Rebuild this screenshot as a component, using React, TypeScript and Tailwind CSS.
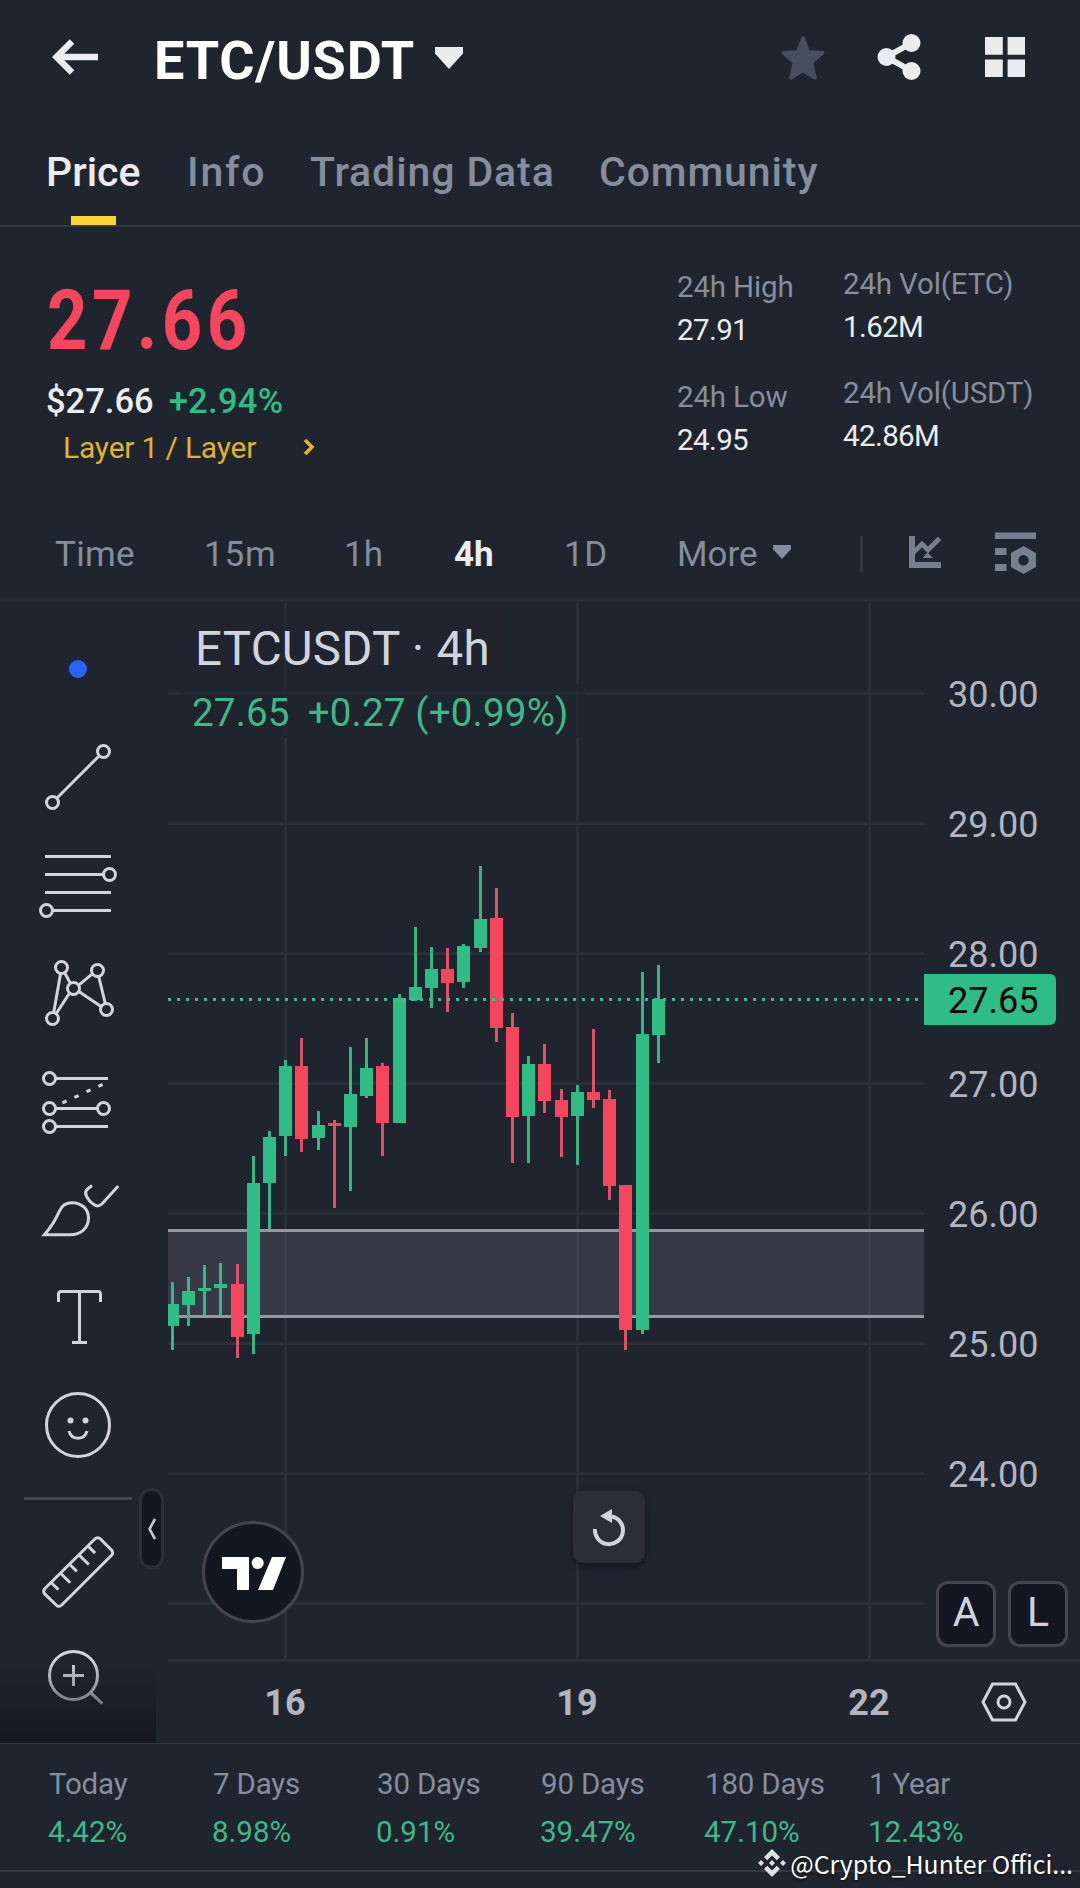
import type { ReactNode } from "react";
import { clsx } from "clsx";

const UP = "#2ebd85";
const DOWN = "#f6465d";

const TABS = [
  { label: "Price", className: "w-[141px] text-[#eaecef]", active: true },
  { label: "Info", className: "w-[123px] tracking-[1.8px]" },
  { label: "Trading Data", className: "w-[289px] tracking-[0.9px]" },
  { label: "Community", className: "tracking-[0.9px]" },
];

const STATS = [
  [
    { label: "24h High", value: "27.91" },
    { label: "24h Low", value: "24.95" },
  ],
  [
    { label: "24h Vol(ETC)", value: "1.62M" },
    { label: "24h Vol(USDT)", value: "42.86M" },
  ],
];

const INTERVALS = [
  { label: "Time", className: "w-[149px] tracking-[0.3px]" },
  { label: "15m", className: "w-[140px] tracking-[0.8px]" },
  { label: "1h", className: "w-[110px]" },
  { label: "4h", className: "w-[110px] font-bold text-[#eaecef]" },
  { label: "1D", className: "w-[112px] tracking-[0.5px]" },
];

const PRICES = ["30.00", "29.00", "28.00", "27.00", "26.00", "25.00", "24.00"];

const PERIODS = [
  { label: "Today", value: "4.42%" },
  { label: "7 Days", value: "8.98%" },
  { label: "30 Days", value: "0.91%" },
  { label: "90 Days", value: "39.47%" },
  { label: "180 Days", value: "47.10%" },
  { label: "1 Year", value: "12.43%" },
];

// [up, high, body top, body bottom, low] in chart pixels
const CANDLES: [number, number, number, number, number][] = [
  [1, 1282, 1304, 1326, 1350],
  [1, 1277, 1291, 1305, 1326],
  [1, 1265, 1288, 1291, 1315],
  [1, 1263, 1284, 1288, 1315],
  [0, 1264, 1284, 1337, 1358],
  [1, 1156, 1183, 1334, 1354],
  [1, 1131, 1137, 1183, 1229],
  [1, 1060, 1066, 1136, 1156],
  [0, 1038, 1066, 1139, 1152],
  [1, 1111, 1125, 1138, 1150],
  [0, 1120, 1123, 1126, 1208],
  [1, 1047, 1094, 1127, 1191],
  [1, 1038, 1068, 1096, 1098],
  [0, 1063, 1066, 1123, 1156],
  [1, 994, 998, 1123, 1123],
  [1, 927, 987, 1000, 1001],
  [1, 947, 969, 988, 1008],
  [0, 948, 969, 983, 1012],
  [1, 944, 946, 982, 988],
  [1, 866, 919, 948, 952],
  [0, 888, 918, 1028, 1042],
  [0, 1013, 1027, 1117, 1163],
  [1, 1056, 1064, 1116, 1163],
  [0, 1044, 1064, 1101, 1113],
  [0, 1089, 1100, 1117, 1157],
  [1, 1085, 1092, 1116, 1165],
  [0, 1029, 1092, 1100, 1108],
  [0, 1090, 1099, 1186, 1200],
  [0, 1185, 1185, 1330, 1350],
  [1, 972, 1034, 1330, 1334],
  [1, 965, 999, 1035, 1063],
];

function Caret({ className }: { className?: string }) {
  return (
    <svg viewBox="0 0 28 22" className={className} fill="currentColor">
      <path d="M0 0h28v6.5L14 22 0 6.5z" />
    </svg>
  );
}

function Header() {
  return (
    <header className="flex h-[116px] shrink-0 items-center pl-[52px] pr-[55px] text-[#eaecef]">
      <svg viewBox="0 0 46 36" className="-mt-0.5 h-[36px] w-[46px]" fill="none" stroke="currentColor" strokeWidth="6.4">
        <path d="M4 18h42M20 2.5 4.5 18 20 33.5" />
      </svg>
      <h1 className="ml-[56px] w-[281px] pt-[5px] text-[54px] leading-none font-bold tracking-[0.8px] whitespace-nowrap text-white">
        ETC/USDT
      </h1>
      <Caret className="h-[22px] w-[28px]" />
      <svg viewBox="0 0 24 24" className="ml-auto h-[54px] w-[54px] text-[#474f5e]" fill="currentColor" stroke="currentColor" strokeWidth="1.6" strokeLinejoin="round">
        <path d="M12 3.2l2.3 6 6.4.5-4.9 4.2 1.5 6.9L12 17.5l-5.3 3.3 1.5-6.9-4.9-4.2 6.4-.5z" />
      </svg>
      <svg viewBox="0 0 44 48" className="-mt-0.5 ml-[47px] h-[48px] w-[44px]" fill="currentColor">
        <path d="M34.5 10 9.5 24l25 14" fill="none" stroke="currentColor" strokeWidth="6" />
        <circle cx="9.5" cy="24" r="9" />
        <circle cx="34.5" cy="10" r="9" />
        <circle cx="34.5" cy="38" r="9" />
      </svg>
      <svg viewBox="0 0 40 40" className="-mt-0.5 ml-[64px] h-[40px] w-[40px]" fill="currentColor">
        <path d="M0 0h17.8v17.8H0zM22.6 0H40v17.8H22.6zM0 22.4h17.8V40H0zM22.6 22.4H40V40H22.6z" />
      </svg>
    </header>
  );
}

function Tabs() {
  return (
    <nav className="flex h-[111px] shrink-0 border-b-2 border-[#323844] pl-[46px] text-[41px] font-medium text-[#848e9c]">
      {TABS.map((tab) => (
        <div key={tab.label} className={clsx("flex flex-col justify-between whitespace-nowrap", tab.className)}>
          <span className="mt-[32px] leading-[48px]">{tab.label}</span>
          {tab.active && <span className="ml-[25px] h-[9px] w-[45px] bg-[#fcd535]" />}
        </div>
      ))}
    </nav>
  );
}

function Summary() {
  return (
    <section className="flex h-[283px] shrink-0">
      <div className="w-[677px] pl-[46px]">
        <div className="mt-[52px] ml-[1px] w-[240px] origin-left scale-x-[0.84] text-[84px] leading-[84px] font-bold tracking-[5.3px] text-[#f6465d]">
          27.66
        </div>
        <div className="mt-[16px] flex gap-[15px] text-[34.5px] leading-[44px] font-medium">
          <span className="text-[#eaecef]">$27.66</span>
          <span className="tracking-[0.3px] text-[#2ebd85]">+2.94%</span>
        </div>
        <div className="mt-[4px] flex h-[40px] items-center pl-[17px] text-[30px] text-[#e0b22d]">
          <span className="w-[240px] tracking-[-0.2px]">Layer 1 / Layer</span>
          <svg viewBox="0 0 12 18" className="h-[18px] w-[12px]" fill="none" stroke="currentColor" strokeWidth="3.6">
            <path d="M2 2l7 7-7 7" />
          </svg>
        </div>
      </div>
      {STATS.map((col, i) => (
        <div
          key={i}
          className={clsx(
            "flex flex-col text-[29.5px] leading-[43px] whitespace-nowrap",
            i === 0 ? "w-[166px] gap-6 pt-[39px]" : "gap-[23px] pt-[36px]"
          )}
        >
          {col.map((s) => (
            <div key={s.label}>
              <div className="tracking-[-0.15px] text-[#848e9c]">{s.label}</div>
              <div className="tracking-[-0.6px] text-[#eaecef]">{s.value}</div>
            </div>
          ))}
        </div>
      ))}
    </section>
  );
}

function IntervalBar() {
  return (
    <div className="flex h-[91px] shrink-0 items-center border-b-3 border-[#272d37] pl-[55px] text-[35px] text-[#848e9c]">
      {INTERVALS.map((it) => (
        <span key={it.label} className={clsx("pt-[3px]", it.className)}>
          {it.label}
        </span>
      ))}
      <span className="w-[97px] pt-[3px] pl-[1px]">More</span>
      <Caret className="-mt-[4px] h-[14px] w-[18px]" />
      <span className="ml-[69px] h-[36px] w-[3px] bg-[#323844]" />
      <svg viewBox="0 0 32 32" className="-mt-1 ml-[46px] h-[32px] w-[32px]" fill="#76808f">
        <path d="M0 0h6v26h26v6H0z" />
        <path d="M4 17l9-9 6 6L30.5 2.5" fill="none" stroke="#76808f" strokeWidth="4.6" />
        <path d="M13.5 22l5-5.500 5.500 5.500z" />
      </svg>
      <svg viewBox="0 0 41 42" className="-mt-[2px] ml-[54px] h-[42px] w-[41px]" fill="#76808f">
        <path d="M0 0.5h41v6.5H0zM0 16h11.5v7H0zM0 32h11.5v7H0z" />
        <path fillRule="evenodd" d="M28.5 14 41 21v14L28.5 42 16 35V21zM28.5 23a5.200 5.200 0 100 10.400 5.200 5.200 0 000-10.400z" />
      </svg>
    </div>
  );
}

function Tool({ children }: { children: ReactNode }) {
  return (
    <div className="flex h-[108px] w-[156px] items-center justify-center">
      <svg viewBox="0 0 28 28" className="h-[84px] w-[84px] overflow-visible" fill="none" stroke="#d1d4dc" strokeWidth="1">
        {children}
      </svg>
    </div>
  );
}

function DrawingTools() {
  return (
    <aside className="relative w-[168px] shrink-0 pt-[14px]">
      <Tool>
        <circle cx="14" cy="14" r="3" fill="#2962ff" stroke="none" />
      </Tool>
      <Tool>
        <circle cx="22.5" cy="5.5" r="2" />
        <circle cx="5.5" cy="22.5" r="2" />
        <path d="M7 21 21 7" />
      </Tool>
      <Tool>
        <path d="M3 4.5h22M3 10.5h19.5M3 16.5h22M5.5 22.5H25" />
        <circle cx="24.5" cy="10.5" r="2" />
        <circle cx="3.5" cy="22.5" r="2" />
      </Tool>
      <Tool>
        <circle cx="8.5" cy="5.5" r="2" />
        <circle cx="20.5" cy="6.5" r="2" />
        <circle cx="12.5" cy="12.5" r="2" />
        <circle cx="5.5" cy="22.5" r="2" />
        <circle cx="23.5" cy="19.5" r="2" />
        <path d="M9.5 7.2l2 3.6M14.2 11.4l4.6-3.8M20.9 8.5l2.2 9M14.3 13.5l7.4 5M11.2 14l-4.5 6.9M8.2 7.5 5.9 20.5" />
      </Tool>
      <Tool>
        <circle cx="4.5" cy="6.5" r="2" />
        <circle cx="4.5" cy="16.5" r="2" />
        <circle cx="22.5" cy="16.5" r="2" />
        <circle cx="4.5" cy="22.5" r="2" />
        <path d="M6.5 6.5H24M6.5 16.5h14M6.5 22.5H24" />
        <path d="M8.8 14.6l1.4-.6M12.8 12.8l1.4-.6M16.8 10.9l1.4-.6M20.8 9.1l1.4-.6" />
      </Tool>
      <Tool>
        <path d="M2.8 22.6h8.500c3.700 0 6.200-2.300 6.200-5.600 0-3-2.300-5.100-5.500-5.100-2.200 0-3.400.9-4.200 2.800-1.300 3-3 5.600-5 7.900z" />
        <path d="M18.700 6.200c-1.700 1-2.800 2-1.800 3.700.5.900 1.200 1.700 2.100 2.400 1.200 1 1.900.9 2.900.1l5.500-6.100" />
      </Tool>
      <Tool>
        <path d="M7.5 9V6.4c0-.6.4-.9.9-.9h12.200c.5 0 .9.3.9.9V9M14.500 5.500v17M12 22.500h5" />
      </Tool>
      <Tool>
        <circle cx="14" cy="14" r="10.500" />
        <circle cx="11.500" cy="12.500" r="1" fill="#d1d4dc" stroke="none" />
        <circle cx="16.500" cy="12.500" r="1" fill="#d1d4dc" stroke="none" />
        <path d="M11 16c.4 1.600 1.500 2.400 3 2.400s2.600-.8 3-2.400" />
      </Tool>
      <div className="my-[18px] ml-[24px] h-[3px] w-[108px] bg-[#434651]" />
      <Tool>
        <path d="M19.700 2.900a1.200 1.200 0 011.700 0l3.800 3.800a1.200 1.200 0 010 1.700L8.500 25.100a1.200 1.200 0 01-1.700 0l-3.900-3.800a1.200 1.200 0 010-1.700z" />
        <path d="M5 17.500l2.500 2.400M8.200 14.400l3.200 3.200M11.200 11.400l2.400 2.400M14.300 8.300l3.300 3.200M17.300 5.300l2.400 2.400" />
      </Tool>
      <Tool>
        <circle cx="12.500" cy="12.500" r="8" />
        <path d="M9 12.500h7M12.500 9v7M18.200 18.200l3.900 3.700" />
      </Tool>
      <div className="absolute bottom-0 left-0 h-[84px] w-[156px] bg-linear-to-b from-[#141722]/0 to-[#141722]/90" />
      <button className="absolute top-[887px] left-[139px] flex h-[81px] w-[25px] items-center justify-center rounded-[12px] border-3 border-[#2a2e39] bg-[#131722]">
        <svg viewBox="0 0 8 22" className="h-[22px] w-[8px]" fill="none" stroke="#c3c6ce" strokeWidth="2.6">
          <path d="M7 1 1.5 11 7 21" />
        </svg>
      </button>
    </aside>
  );
}

function CandleChart() {
  return (
    <svg viewBox="168 601 756 1058" className="h-[1058px] w-[756px]" shapeRendering="crispEdges">
      {[693, 823, 953, 1083, 1213, 1343, 1473, 1603].map((y) => (
        <rect key={y} x="168" y={y - 1} width="756" height="3" fill="#292f39" />
      ))}
      {[284, 576, 868].map((x) => (
        <rect key={x} x={x} y="601" width="3" height="1058" fill="#292f39" />
      ))}
      <rect x="168" y="1232" width="756" height="84" fill="#9496ab" fillOpacity="0.18" />
      <rect x="168" y="1229" width="756" height="3" fill="#9598a1" />
      <rect x="168" y="1315" width="756" height="3" fill="#9598a1" />
      {CANDLES.map(([up, high, top, bottom, low], i) => {
        const x = Math.floor(172.3 + i * 16.2);
        return (
          <g key={i}>
            <rect x={x - 1} y={high} width="3" height={low - high} fill={up ? "#3bb487" : "#df5168"} />
            <rect x={x - 6} y={top} width="13" height={bottom - top} fill={up ? UP : DOWN} />
          </g>
        );
      })}
      <path d="M168 999.5H922" stroke="#45b78c" strokeWidth="3" strokeDasharray="3 6" />
    </svg>
  );
}

function ChartPane() {
  return (
    <div className="relative h-[1058px] w-[756px]">
      <CandleChart />
      <div className="absolute top-[7px] left-[12px] flex flex-col items-start whitespace-pre">
        <div className="h-[76px] bg-[#1f252f]/60 pr-4 pl-[15px] text-[47.5px] leading-[83px] tracking-[0.25px] text-[#d1d4dc]">
          ETCUSDT · 4h
        </div>
        <div className="h-[54px] bg-[#1f252f]/70 pr-4 pl-[12px] text-[38.5px] leading-[57px] tracking-[0.2px] text-[#3fb888]">
          27.65<span className="ml-[18px]">+0.27 (+0.99%)</span>
        </div>
      </div>
      <div className="absolute top-[920px] left-[34px] flex h-[102px] w-[102px] items-center justify-center rounded-full border-3 border-[#434651] bg-[#131722]">
        <svg viewBox="0 0 64 33" className="mt-[3px] ml-[2px] h-[33px] w-[64px]" fill="#fff">
          <path d="M0 0h27v33H15V12H0z" />
          <circle cx="35.7" cy="6" r="6" />
          <path d="M50 0h14L51 33H36z" />
        </svg>
      </div>
      <button className="absolute top-[890px] left-[405px] flex h-[72px] w-[72px] items-center justify-center rounded-[10px] bg-[#2a2e39] shadow-[0_4px_10px_rgba(0,0,0,0.4)]">
        <svg viewBox="0 0 36 40" className="mt-[1px] h-[40px] w-[36px]" fill="none" stroke="#d1d4dc" strokeWidth="4">
          <path d="M4 21a14 14 0 1017-12.5" />
          <path d="M9 8 21 1v14z" fill="#d1d4dc" stroke="none" />
        </svg>
      </button>
    </div>
  );
}

function PriceAxis() {
  return (
    <div className="relative w-[156px] text-[36px] text-[#b2b5be]">
      <div className="pt-[28px] pl-[24px]">
        {PRICES.map((p) => (
          <div key={p} className="h-[130px] leading-[133px]">
            {p}
          </div>
        ))}
      </div>
      <div className="mt-[42px] flex gap-3 pl-[12px]">
        {["A", "L"].map((k) => (
          <button key={k} className="h-[66px] w-[60px] rounded-xl border-3 border-[#434651] bg-[#131722] pb-[3px] text-[41px] leading-[57px] text-[#d1d4dc]">
            {k}
          </button>
        ))}
      </div>
      <div className="absolute top-[373px] left-0 h-[51px] w-[132px] rounded-r-[6px] bg-[#2ebd85] pl-[24px] leading-[54px] text-black">27.65</div>
    </div>
  );
}

function TimeAxis() {
  return (
    <div className="flex h-[84px] items-center border-t-3 border-[#292f39] pl-[67px] text-[36px] font-bold text-[#b2b5be]">
      <div className="flex w-[752px] gap-[192px]">
        {["16", "19", "22"].map((d) => (
          <span key={d} className="w-[100px] text-center">
            {d}
          </span>
        ))}
      </div>
      <svg viewBox="0 0 46 40" className="-mt-[1px] -ml-[6px] h-[40px] w-[46px]" fill="none" stroke="#d1d4dc" strokeWidth="3">
        <path d="M11.5 2h23L44 20l-9.5 18h-23L2 20z" />
        <circle cx="23" cy="20" r="6" />
      </svg>
    </div>
  );
}

function Performance() {
  return (
    <section className="flex h-[129px] shrink-0 border-t border-b-2 border-t-[#353b46] border-b-[#323844] pl-[48px] text-[29.5px] whitespace-nowrap">
      {PERIODS.map((p) => (
        <div key={p.label} className="flex w-[164px] shrink-0 flex-col pt-[24px]">
          <span className="pl-[1px] leading-[32px] tracking-[-0.2px] text-[#848e9c]">{p.label}</span>
          <span className="mt-[16px] leading-[32px] text-[#3fb888]">{p.value}</span>
        </div>
      ))}
    </section>
  );
}

function Watermark() {
  return (
    <div className="absolute right-[7px] bottom-[9px] flex items-center gap-[4px] font-['Noto_Sans_CJK_SC',sans-serif] text-[24.8px] leading-[32px] text-white [text-shadow:0_1px_3px_rgba(0,0,0,0.7)]">
      <svg viewBox="0 0 28 28" className="h-[28px] w-[28px]" fill="#dfe0e2">
        <path d="M14 0l8 8-3.2 3.2L14 6.4l-4.8 4.8L6 8zM14 28l8-8-3.2-3.2-4.8 4.8-4.8-4.8L6 20zM3 11l3 3-3 3-3-3zM25 11l3 3-3 3-3-3zM14 11l3 3-3 3-3-3z" />
      </svg>
      <span>@Crypto_Hunter Offici...</span>
    </div>
  );
}

export default function App() {
  return (
    <div className="relative flex h-[1888px] w-[1080px] flex-col overflow-hidden bg-[#1f252f] font-['Roboto',sans-serif]">
      <Header />
      <Tabs />
      <Summary />
      <IntervalBar />
      <main className="flex h-[1142px] shrink-0">
        <DrawingTools />
        <div className="flex flex-col">
          <div className="flex h-[1058px] w-[912px]">
            <ChartPane />
            <PriceAxis />
          </div>
          <TimeAxis />
        </div>
      </main>
      <Performance />
      <Watermark />
    </div>
  );
}
